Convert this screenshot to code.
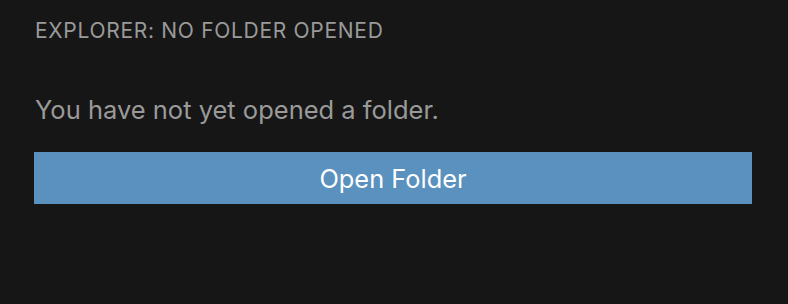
export default function App() {
  return (
    <div className="w-[788px] h-[304px] bg-[#161616] font-['Inter',sans-serif] overflow-hidden">
      <div className="px-[35px] pt-[19px]">
        <h2 className="text-[21px] leading-[24px] text-[#9a9a9a] tracking-[0.7px]">EXPLORER: NO FOLDER OPENED</h2>
      </div>
      <div className="pl-[35px] pr-[36px] pt-[52px]">
        <p className="text-[25.5px] leading-[30px] text-[#9a9a9a]">You have not yet opened a folder.</p>
        <button className="mt-[27px] w-[718px] h-[52px] bg-[#5a91be] text-white text-[25.4px] ml-[-1px] pt-[2px]">Open Folder</button>
      </div>
    </div>
  );
}
